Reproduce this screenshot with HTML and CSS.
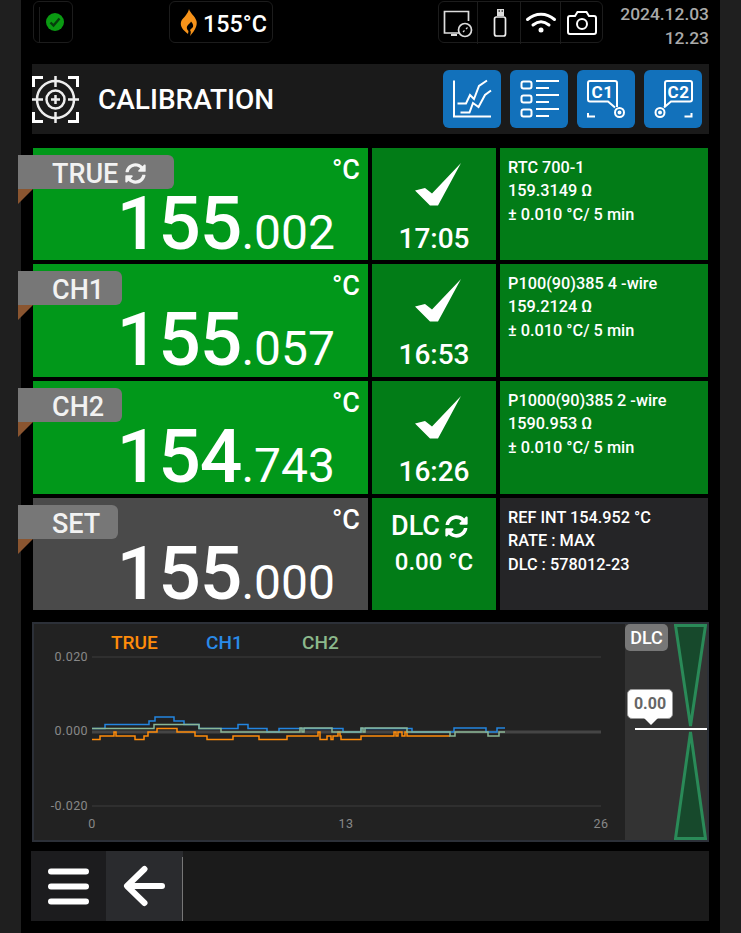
FILE: index.html
```html
<!DOCTYPE html>
<html lang="en">
<head>
  <meta charset="UTF-8">
  <title>Calibration</title>
  <link rel="stylesheet" href="styles.css">
</head>
<body>
  <svg class="defs" width="0" height="0">
    <symbol id="sync" viewBox="0 0 512 512">
      <path fill="currentColor" d="M370.72 133.28C339.458 104.008 298.888 87.962 255.848 88c-77.458.068-144.328 53.178-162.791 126.85-1.344 5.363-6.122 9.15-11.651 9.15H24.103c-7.498 0-13.194-6.807-11.807-14.176C33.933 94.924 134.813 8 256 8c66.448 0 126.791 26.136 171.315 68.685L463.03 40.97C478.149 25.851 504 36.559 504 57.941V192c0 13.255-10.745 24-24 24H345.941c-21.382 0-32.09-25.851-16.971-40.971l41.75-41.749zM32 296h134.059c21.382 0 32.09 25.851 16.971 40.971l-41.75 41.75c31.262 29.273 71.835 45.319 114.876 45.28 77.418-.07 144.315-53.144 162.787-126.849 1.344-5.363 6.122-9.15 11.651-9.15h57.304c7.498 0 13.194 6.807 11.807 14.176C478.067 417.076 377.187 504 256 504c-66.448 0-126.791-26.136-171.315-68.685L48.97 471.03C33.851 486.149 8 475.441 8 454.059V320c0-13.255 10.745-24 24-24z"/>
    </symbol>
    <symbol id="check" viewBox="0 0 47 44">
      <path fill="currentColor" d="M0 27.500L10 25L17 30.500L46 0L23 42.500H15Z"/>
    </symbol>
  </svg>

  <div class="screen">
    <header class="status-bar">
      <div class="tile tile-status">
        <svg width="20" height="20" viewBox="0 0 20 20">
          <circle cx="10" cy="10" r="9" fill="#0a9a12"/>
          <path d="M5.500 10.500l3 3 6-7" fill="none" stroke="#063d0c" stroke-width="2.400"/>
        </svg>
      </div>
      <div class="tile tile-temp">
        <svg width="18" height="27" viewBox="0 0 18 27">
          <path fill="#f7931a" d="M9 0c1 4 6 7 7.500 12 1 4-1 9-6.500 15 1-3 1-5 0-6l3-3c.5-2-.5-4-2-5.500-.5 2-3 2.500-4 5-.5 1.500 0 3 1.500 4.500l-.5 3C3 21 0 17.500 1 13c.7-3 3-4 5-7 1-1.500 2.500-3.500 3-6z"/>
        </svg>
        <span class="temp-text">155°C</span>
      </div>
      <div class="tile-group">
        <div class="tile-icon">
          <svg width="40" height="42" viewBox="0 0 40 42" fill="none" stroke="#ddd" stroke-width="1.700">
            <path d="M30.500 19V9.500H6.500v21.500H21"/>
            <path d="M13 33h6" stroke-width="2"/>
            <circle cx="27" cy="28" r="6.500"/>
            <path d="M25 30l1.500-1.500M28 27l1.500-1.500" stroke-width="1.200"/>
          </svg>
        </div>
        <div class="tile-icon">
          <svg width="40" height="42" viewBox="0 0 40 42" fill="none" stroke="#eee" stroke-width="1.700">
            <path d="M18 7h7v7h-7z" fill="#ddd" stroke="none"/>
            <path d="M19.500 9h1.500M22.500 9h1.500" stroke="#333" stroke-width="1.500"/>
            <rect x="15.500" y="15" width="11" height="19" rx="2"/>
          </svg>
        </div>
        <div class="tile-icon">
          <svg width="40" height="42" viewBox="0 0 40 42" fill="none" stroke="#fff" stroke-width="3" stroke-linecap="round">
            <path d="M6.500 17.500c8-7 19-7 27 0"/>
            <path d="M12 23c5-4 11-4 16 0"/>
            <circle cx="20" cy="28" r="2.500" fill="#fff" stroke="none"/>
          </svg>
        </div>
        <div class="tile-icon">
          <svg width="40" height="42" viewBox="1 0 40 42" fill="none" stroke="#fff" stroke-width="2">
            <path d="M9 14h5l2.500-4h9l2.500 4h5a2 2 0 0 1 2 2v14a2 2 0 0 1-2 2H9a2 2 0 0 1-2-2V16a2 2 0 0 1 2-2z"/>
            <circle cx="21" cy="22" r="5"/>
          </svg>
        </div>
      </div>
      <div class="clock">
        <div>2024.12.03</div>
        <div>12.23</div>
      </div>
    </header>

    <section class="title-bar">
      <svg class="title-icon" width="47" height="47" viewBox="0 0 47 47" fill="none" stroke="#eee">
        <path d="M1.500 11V1.500H11M36 1.500h9.500V11M45.500 36v9.500H36M11 45.500H1.500V36" stroke="#fff" stroke-width="3"/>
        <circle cx="23.500" cy="23.500" r="18.500" stroke-width="2.500"/>
        <circle cx="23.500" cy="23.500" r="9" stroke-width="2.500"/>
        <path d="M23.500 0v11M23.500 36v11M0 23.500h11M36 23.500h11" stroke-width="2.500"/>
        <path d="M23.500 19v9M19 23.500h9" stroke-width="2.500"/>
      </svg>
      <h1 class="title">CALIBRATION</h1>
      <div class="title-buttons">
        <button class="tool-btn">
          <svg width="58" height="58" viewBox="0 0 58 58" fill="none" stroke="#fff" stroke-width="2">
            <path d="M11 10.500v36h37"/>
            <path d="M14.500 33.500H23l4-8.500 4 4 5-13 8-5.500"/>
            <path d="M17.500 42.500h9l3.500-9.500 5.500 4L42 25l6-4.500"/>
          </svg>
        </button>
        <button class="tool-btn">
          <svg width="58" height="58" viewBox="0 0 58 58" fill="none" stroke="#fff" stroke-width="2">
            <rect x="11.500" y="11.500" width="10" height="7" rx="2"/>
            <rect x="11.500" y="25.500" width="10" height="7" rx="2"/>
            <rect x="11.500" y="39.500" width="10" height="7" rx="2"/>
            <path d="M26 11h23M26 18h13M26 25h23M26 32h13M26 39h23M26 46h13"/>
          </svg>
        </button>
        <button class="tool-btn">
          <svg width="58" height="58" viewBox="0 0 58 58" fill="none" stroke="#fff" stroke-width="2">
            <path d="M38 37.500L31 31.500H13a2 2 0 0 1-2-2V13a2 2 0 0 1 2-2h25a2 2 0 0 1 2 2v24"/>
            <circle cx="42.500" cy="42.500" r="4.500"/>
            <circle cx="42.500" cy="42.500" r="1" fill="#fff"/>
            <path d="M11 43v3.500h7"/>
            <text x="25.500" y="27.500" class="btn-text">C1</text>
          </svg>
        </button>
        <button class="tool-btn">
          <svg width="58" height="58" viewBox="0 0 58 58" fill="none" stroke="#fff" stroke-width="2">
            <path d="M20 37.500l7-6h19a2 2 0 0 0 2-2V13a2 2 0 0 0-2-2H23a2 2 0 0 0-2 2v24"/>
            <circle cx="16" cy="42.500" r="4.500"/>
            <circle cx="16" cy="42.500" r="1" fill="#fff"/>
            <path d="M47.500 43v3.500h-7"/>
            <text x="34.500" y="27.500" class="btn-text">C2</text>
          </svg>
        </button>
      </div>
    </section>

    <section class="readings">
      <div class="reading green">
        <div class="tag tag-true">TRUE <svg class="sync" width="21" height="21"><use href="#sync"/></svg></div>
        <div class="unit">°C</div>
        <div class="value">155<small>.002</small></div>
      </div>
      <div class="state">
        <svg class="check" width="47" height="44"><use href="#check"/></svg>
        <div class="time">17:05</div>
      </div>
      <div class="info">RTC 700-1<br>159.3149 Ω<br>± 0.010 °C/ 5 min</div>

      <div class="reading green">
        <div class="tag tag-ch">CH1</div>
        <div class="unit">°C</div>
        <div class="value">155<small>.057</small></div>
      </div>
      <div class="state">
        <svg class="check" width="47" height="44"><use href="#check"/></svg>
        <div class="time">16:53</div>
      </div>
      <div class="info">P100(90)385 4 -wire<br>159.2124 Ω<br>± 0.010 °C/ 5 min</div>

      <div class="reading green">
        <div class="tag tag-ch">CH2</div>
        <div class="unit">°C</div>
        <div class="value">154<small>.743</small></div>
      </div>
      <div class="state">
        <svg class="check" width="47" height="44"><use href="#check"/></svg>
        <div class="time">16:26</div>
      </div>
      <div class="info">P1000(90)385 2 -wire<br>1590.953 Ω<br>± 0.010 °C/ 5 min</div>

      <div class="reading grey">
        <div class="tag tag-set">SET</div>
        <div class="unit">°C</div>
        <div class="value">155<small>.000</small></div>
      </div>
      <div class="state state-dlc">
        <div class="dlc-head">DLC <svg class="sync" width="23" height="23"><use href="#sync"/></svg></div>
        <div class="dlc-value">0.00 °C</div>
      </div>
      <div class="info info-dark">REF INT 154.952 °C<br>RATE : MAX<br>DLC : 578012-23</div>
    </section>

    <section class="chart">
      <!-- viewBox uses screen coordinates so the traces can be read off directly -->
      <svg class="plot" width="591" height="216" viewBox="34 624 591 216">
        <text x="111" y="649" class="legend" fill="#ff8c0a">TRUE</text>
        <text x="206" y="649" class="legend" fill="#2a8ae8">CH1</text>
        <text x="302" y="649" class="legend" fill="#8cb98c">CH2</text>

        <path d="M92 657H601M92 806H601" stroke="#353535" stroke-width="1.500"/>
        <path d="M92 732H601" stroke="#454545" stroke-width="3"/>

        <text x="88" y="661" class="axis" text-anchor="end">0.020</text>
        <text x="88" y="735" class="axis" text-anchor="end">0.000</text>
        <text x="88" y="810" class="axis" text-anchor="end">-0.020</text>
        <text x="92" y="828" class="axis" text-anchor="middle">0</text>
        <text x="346" y="828" class="axis" text-anchor="middle">13</text>
        <text x="601" y="828" class="axis" text-anchor="middle">26</text>

        <path class="trace" stroke="#2385e0" d="M92 728.500H105V724.500H149V721H155V717H174V721H184V724.500H199V728.500H238V724.500H248V728.500H267V732H279V728.500H332V728.500H343V732H361V728.500H412V732H454V728H486V732H497V728H505"/>
        <path class="trace" stroke="#ff8c0a" d="M92 739.500H100V736H114V732H116V736H135V739.500H144V736H148V732H157V728.500H177V732H195V736H207V739.500H233V736H259V739.500H287V736H318V732H320V739.500H322H327V736H331V739.500H333V736H338V732H340V736H341V739.500H361V736H394V732H396V736H398V732H402V736H405V732H407V736H450"/>
        <path class="trace" stroke="#8ab795" d="M92 728.500H154V724.500H199V728.500H221V732H300V728H302V732H304V728H332V732H361V728H363V732H365V728H407V732H450V736H455V732H488V736H499V732H505"/>
      </svg>
      <div class="dlc-side">
        <svg class="hourglass" width="33" height="216" viewBox="0 0 33 216">
          <path d="M1.500 1.500H31.500L16.500 102Z"/>
          <path d="M16.500 108L31.500 214.500H1.500Z"/>
        </svg>
        <div class="dlc-tag">DLC</div>
        <div class="dlc-tip">0.00</div>
        <div class="dlc-mark"></div>
      </div>
    </section>

    <nav class="bottom-bar">
      <div class="nav-cell">
        <svg width="42" height="37" viewBox="0 0 42 37" fill="none" stroke="#fff" stroke-width="6" stroke-linecap="round">
          <path d="M3 3.500h35M3 18.500h35M3 33.500h35"/>
        </svg>
      </div>
      <div class="nav-cell nav-cell-active">
        <svg width="44" height="42" viewBox="0 0 44 42" fill="none" stroke="#fff" stroke-width="6" stroke-linecap="round" stroke-linejoin="round">
          <path d="M39 21H5M21.500 4L4 21l17.500 17"/>
        </svg>
      </div>
    </nav>
  </div>
</body>
</html>
```

FILE: styles.css
```css
* {
  box-sizing: border-box;
}

html,
body {
  margin: 0;
  height: 933px;
  overflow: hidden;
}

body {
  background-color: #1f1f1f;
  font-family: 'Roboto', 'Liberation Sans', sans-serif;
  color: #fff;
}

.defs {
  position: absolute;
}

.screen {
  width: 699px;
  height: 933px;
  margin-left: 21px;
  padding: 1px 11px 0 11px;
  background-color: #000;
}

/* top status row */
.status-bar {
  display: flex;
  height: 42px;
}

.tile {
  display: flex;
  align-items: center;
  border: 1px solid #1c1c1c;
  border-radius: 6px;
}

.tile-status {
  position: relative;
  width: 40px;
  margin-left: 1px;
  justify-content: center;
  padding-left: 4px;
}

.tile-status::before {
  content: "";
  position: absolute;
  left: 5px;
  top: 5px;
  bottom: 0;
  border-left: 1px solid #1c1c1c;
}

.tile-temp {
  width: 104px;
  margin-left: 96px;
  padding-left: 10px;
}

.temp-text {
  margin-left: 5px;
  margin-top: 3px;
  font-size: 23.300px;
  font-weight: 500;
}

.tile-group {
  display: grid;
  grid-template-columns: 39px 43px 40px 41px;
  width: 165px;
  margin-left: 165px;
  border: 1px solid #1c1c1c;
  border-radius: 6px;
}

.tile-icon {
  display: flex;
  justify-content: center;
  border-right: 1px solid #1c1c1c;
}

.tile-icon svg {
  flex: none;
}

.tile-icon:last-child {
  border-right: none;
}

.clock {
  flex: 1;
  padding-top: 1px;
  text-align: right;
  color: #aaa;
  font-size: 17.400px;
  font-weight: 500;
  line-height: 24px;
}

/* title */
.title-bar {
  display: flex;
  align-items: center;
  height: 70px;
  margin-top: 21px;
  background-color: #1a1a1a;
}

.title-icon {
  display: block;
}

.title {
  margin: 0 0 0 19px;
  font-size: 28px;
  font-weight: 500;
}

.title-buttons {
  display: flex;
  gap: 9px;
  margin-left: auto;
  margin-right: 7px;
}

.tool-btn {
  width: 58px;
  height: 58px;
  padding: 0;
  border: none;
  border-radius: 6px;
  background-color: #1271bb;
}

.tool-btn svg {
  display: block;
}

.btn-text {
  font-family: 'Roboto', sans-serif;
  font-size: 17px;
  font-weight: 700;
  letter-spacing: 0.500px;
  fill: #fff;
  stroke: none;
  text-anchor: middle;
}

/* reading rows */
.readings {
  display: grid;
  grid-template-columns: 335px 124px 208px;
  grid-template-rows: 112px 113px 113px 112px;
  gap: 4px;
  margin-top: 14px;
  margin-left: 1px;
}

.reading {
  position: relative;
  display: flex;
  flex-direction: column;
  align-items: flex-end;
}

.green {
  background-color: #01981a;
}

.grey {
  background-color: #4a4a4a;
}

.tag {
  position: absolute;
  top: 7px;
  left: -15px;
  display: flex;
  align-items: center;
  height: 34px;
  padding: 3px 0 0 34px;
  border-radius: 0 6px 6px 0;
  background-color: #777;
  color: #f2f2f2;
  font-size: 27px;
  font-weight: 500;
}

.tag::after {
  content: "";
  position: absolute;
  left: 0;
  top: 34px;
  border-top: 15px solid #8a5530;
  border-right: 15px solid transparent;
}

.tag-true {
  width: 156px;
}

.tag-ch {
  width: 104px;
}

.tag-set {
  width: 100px;
}

.sync {
  display: block;
  margin-left: 7px;
  color: #f2f2f2;
}

.unit {
  margin: 8px 8px 0 0;
  font-size: 27px;
  font-weight: 500;
  line-height: 28px;
}

.value {
  margin-right: 33px;
  margin-top: 1px;
  font-size: 75px;
  font-weight: 500;
  letter-spacing: -1px;
  line-height: 76px;
  white-space: nowrap;
}

.value small {
  font-size: 48px;
  font-weight: 400;
  letter-spacing: 0;
}

.state {
  display: flex;
  flex-direction: column;
  align-items: center;
  background-color: #027c17;
}

.check {
  display: block;
  margin: 15px 0 0 9px;
}

.time {
  margin-top: 16px;
  font-size: 28px;
  font-weight: 500;
  line-height: 32px;
}

.state-dlc {
  align-items: stretch;
}

.dlc-head {
  display: flex;
  align-items: center;
  margin: 12px 0 0 19px;
  font-size: 27px;
  font-weight: 500;
  line-height: 32px;
}

.dlc-head .sync {
  margin-left: 5px;
  color: #fff;
}

.dlc-value {
  margin-top: 5px;
  text-align: center;
  font-size: 24px;
  font-weight: 500;
  line-height: 30px;
}

.info {
  padding: 8px 8px;
  background-color: #027c17;
  font-size: 16.300px;
  font-weight: 500;
  line-height: 23.300px;
}

.info-dark {
  background-color: #252527;
}

/* chart */
.chart {
  display: flex;
  height: 220px;
  margin-top: 12px;
  border: 2px solid #2c3038;
  background-color: #222;
}

.plot {
  display: block;
  flex: none;
}

.legend {
  font-size: 19px;
  font-weight: 500;
}

.axis {
  font-size: 12.500px;
  fill: #888;
  letter-spacing: 0.400px;
}

.trace {
  fill: none;
  stroke-width: 1.500;
}

.dlc-side {
  position: relative;
  flex: 1;
  background-color: #333;
}

.hourglass {
  position: absolute;
  top: 0;
  right: 0;
}

.hourglass path {
  fill: #17492c;
  stroke: #2a8a58;
  stroke-width: 3;
}

.dlc-tag {
  position: absolute;
  top: 0;
  left: 0;
  width: 43px;
  height: 27px;
  border-radius: 5px;
  background-color: #777;
  text-align: center;
  font-size: 18px;
  font-weight: 500;
  line-height: 27px;
}

.dlc-tip {
  position: absolute;
  top: 65px;
  left: 2px;
  width: 46px;
  height: 30px;
  border: 1px solid #999;
  border-radius: 5px;
  background-color: #fff;
  color: #666;
  text-align: center;
  font-size: 16px;
  font-weight: 700;
  line-height: 28px;
}

.dlc-tip::after {
  content: "";
  position: absolute;
  left: 16px;
  top: 28px;
  border-top: 7px solid #fff;
  border-left: 7px solid transparent;
  border-right: 7px solid transparent;
}

.dlc-mark {
  position: absolute;
  top: 104px;
  left: 10px;
  right: 0;
  height: 2px;
  background-color: #fff;
}

/* bottom nav */
.bottom-bar {
  display: flex;
  height: 70px;
  margin-top: 9px;
  margin-left: -1px;
  background-color: #1b1b1b;
}

.nav-cell {
  display: flex;
  align-items: center;
  justify-content: center;
  width: 75px;
  background-color: #1c1c1e;
}

.nav-cell-active {
  position: relative;
  width: 77px;
  background-color: #2a2b2e;
}

.nav-cell-active::after {
  content: "";
  position: absolute;
  right: 0;
  top: 6px;
  bottom: 0;
  border-right: 1px solid #777;
}
```
